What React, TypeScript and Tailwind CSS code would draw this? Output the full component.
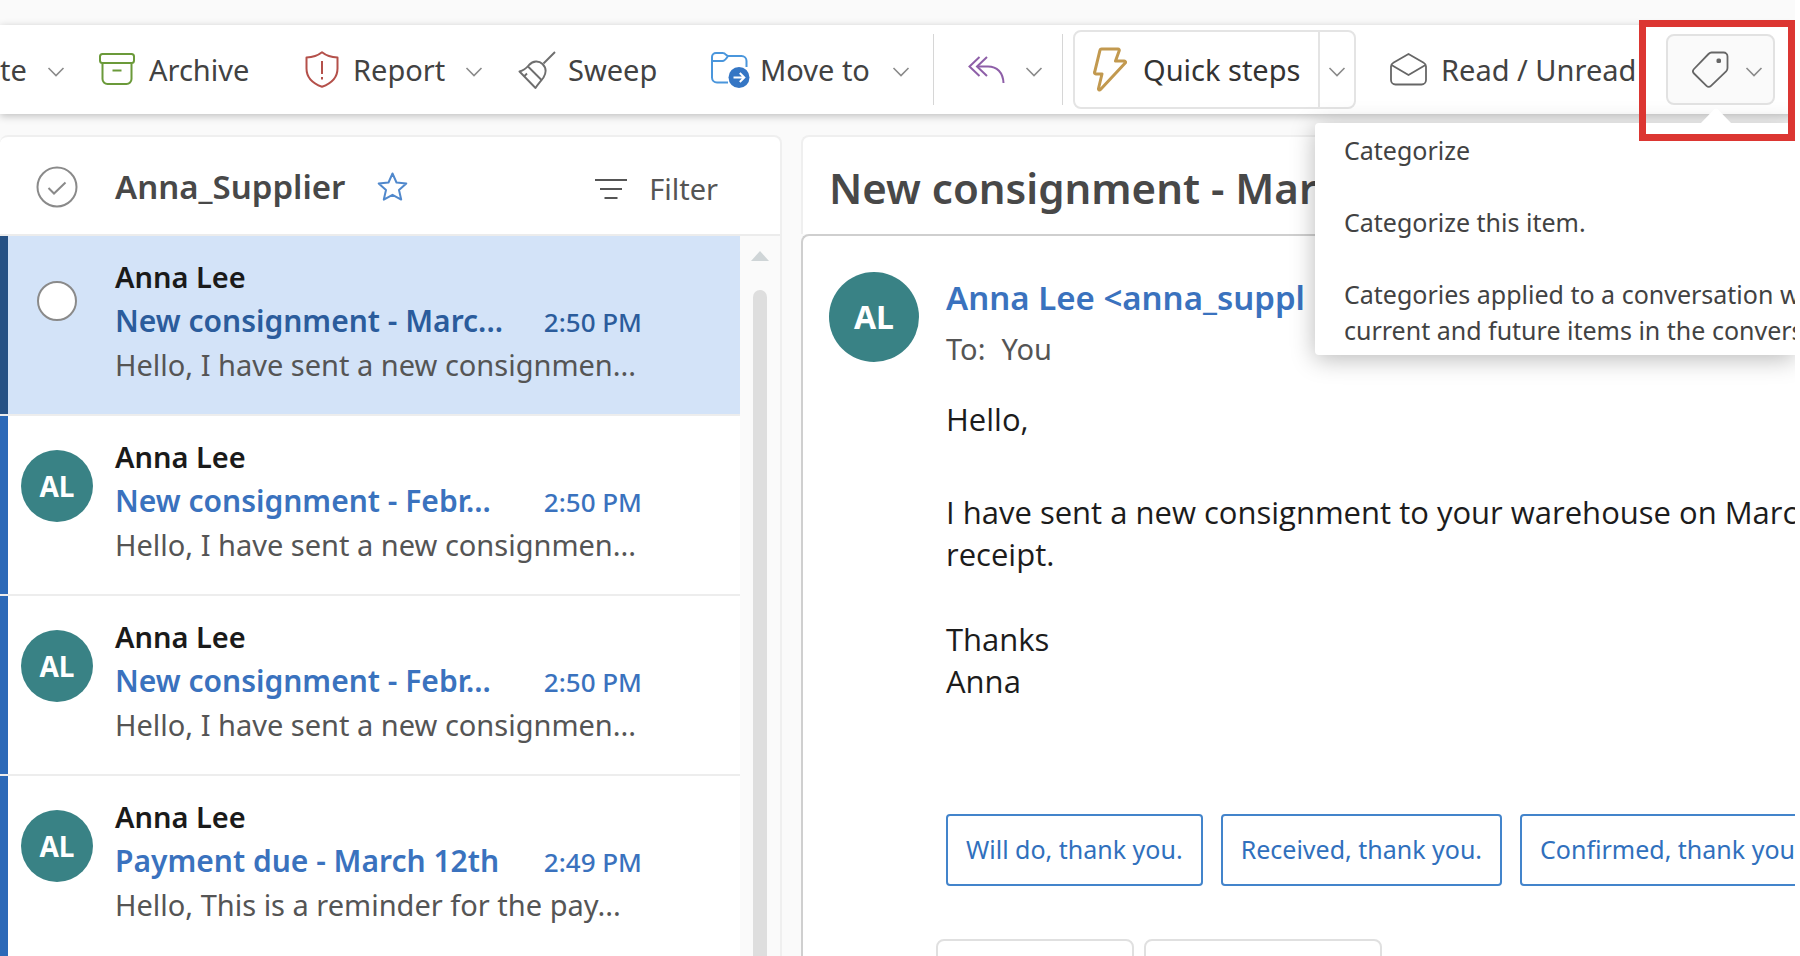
import React from "react";

interface Mail {
  id: number;
  from: string;
  subject: string;
  time: string;
  preview: string;
  selected?: boolean;
}

const mails: Mail[] = [
  {
    id: 1,
    from: "Anna Lee",
    subject: "New consignment - Marc...",
    time: "2:50 PM",
    preview: "Hello, I have sent a new consignmen...",
    selected: true,
  },
  {
    id: 2,
    from: "Anna Lee",
    subject: "New consignment - Febr...",
    time: "2:50 PM",
    preview: "Hello, I have sent a new consignmen...",
  },
  {
    id: 3,
    from: "Anna Lee",
    subject: "New consignment - Febr...",
    time: "2:50 PM",
    preview: "Hello, I have sent a new consignmen...",
  },
  {
    id: 4,
    from: "Anna Lee",
    subject: "Payment due - March 12th",
    time: "2:49 PM",
    preview: "Hello, This is a reminder for the pay...",
  },
];

const replies = [
  "Will do, thank you.",
  "Received, thank you.",
  "Confirmed, thank you",
];

const Chevron = ({ className = "" }: { className?: string }) => (
  <svg
    width="18"
    height="10"
    viewBox="0 0 18 10"
    fill="none"
    stroke="#8a8a8a"
    strokeWidth="1.6"
    className={`shrink-0 ${className}`}
  >
    <path d="M1.500 1L9 8.500 16.500 1" />
  </svg>
);

const ArchiveIcon = () => (
  <svg width="36" height="33" viewBox="0 0 36 33" fill="none" stroke="#6b9a3a" strokeWidth="2">
    <rect x="1" y="1" width="34" height="9" rx="2.5" />
    <path d="M3.500 10v16a5 5 0 0 0 5 5h19a5 5 0 0 0 5-5V10M13.500 17.500h9" />
  </svg>
);

const ReportIcon = () => (
  <svg width="34" height="37" viewBox="0 0 34 37" fill="none" stroke="#b4504a" strokeWidth="2">
    <path
      d="M17 1.200c4.500 3.600 9.500 5 15.500 5.300v11c0 8.500-5 14.500-15.500 18.300C6.500 32 1.500 26 1.500 17.500v-11C7.500 6.200 12.500 4.800 17 1.200z"
      strokeLinejoin="round"
    />
    <path d="M17 10v13M17 26v2.500" />
  </svg>
);

const SweepIcon = () => (
  <svg width="38" height="38" viewBox="0 0 38 38" fill="none" stroke="#6e6e6e" strokeWidth="1.900">
    <path d="M37 1L25.500 12.500" />
    <path d="M1.500 20.500c4-1 7-3.500 9.500-6.500 4-4.500 10-4.500 13.500-1s4 8.500 1 13.500c-2.500 3.500-5.500 6.500-8 10.500L1.500 20.500z" strokeLinejoin="round" />
    <path d="M10 15.500L24 29.500M6 25.500l3-3" />
  </svg>
);

const MoveIcon = () => (
  <svg width="40" height="38" viewBox="0 0 40 38" fill="none" stroke="#4a96dc" strokeWidth="2">
    <path d="M18 31.500H7a5 5 0 0 1-5-5V6a4 4 0 0 1 4-4h6.500c1.500 0 2.500.5 3.500 1.800L18 5h13.500A5 5 0 0 1 36.500 10v6" />
    <path d="M2 10h10.500c2 0 3-1 5.500-5" />
    <circle cx="29" cy="26.500" r="10.500" fill="#3576c4" stroke="none" />
    <path d="M23.500 26.500H34M29.800 22l4.500 4.500-4.500 4.500" stroke="#fff" />
  </svg>
);

const ReplyAllIcon = () => (
  <svg width="37" height="28" viewBox="0 0 37 28" fill="none" stroke="#8e5fa8" strokeWidth="2">
    <path d="M11.500 1L1.500 10.500l10 9.500M19 1L9 10.500l10 9.500" />
    <path d="M9.500 10.500H20c9 0 15 6 15.500 16.500" />
  </svg>
);

const BoltIcon = () => (
  <svg width="34" height="45" viewBox="0 0 34 45" fill="none" stroke="#c2994f" strokeWidth="3" strokeLinejoin="round">
    <path d="M8.500 2h16.500c1 0 1.500.8 1.200 1.700L22.500 14h8.800c1.200 0 1.700 1.200.9 2.100L7.500 42.500c-1 1-2.300.2-2-1L9 27H2.800c-.9 0-1.500-.8-1.200-1.700L7 3.200C7.200 2.500 7.800 2 8.500 2z" />
  </svg>
);

const MailOpenIcon = () => (
  <svg width="37" height="33" viewBox="0 0 37 33" fill="none" stroke="#666" strokeWidth="1.800" strokeLinejoin="round">
    <path d="M1 13.500c0-1.800.8-3 2.300-3.800L18.500 1l15.200 8.700c1.500.8 2.300 2 2.300 3.800V27a4.500 4.500 0 0 1-4.500 4.500h-26A4.500 4.500 0 0 1 1 27V13.500z" />
    <path d="M1.500 12l17 10 17-10" />
  </svg>
);

const TagIcon = () => (
  <svg width="37" height="37" viewBox="0 0 37 37" fill="none" stroke="#666" strokeWidth="1.800" strokeLinejoin="round">
    <path d="M19.500 1.500h12a4 4 0 0 1 4 4v11.500c0 1.500-.4 2.400-1.400 3.400L19 34.800c-1.500 1.400-3 1.400-4.500 0L2 22.500c-1.500-1.500-1.400-3 0-4.500L16.500 3c1-1 1.800-1.500 3-1.500z" />
    <rect x="24.500" y="7.500" width="4.500" height="4.500" rx="1.500" fill="#666" stroke="none" />
  </svg>
);

const Toolbar = () => (
  <header className="relative z-10 flex h-[89px] shrink-0 items-center bg-white pr-5 text-[29px] text-[#424242] shadow-[0_2px_8px_rgba(0,0,0,0.24)]">
    <button className="flex w-[99px] shrink-0 items-center gap-5">
      te
      <Chevron className="mt-1" />
    </button>
    <button className="flex w-[206px] shrink-0 items-center gap-3.5">
      <ArchiveIcon />
      Archive
    </button>
    <button className="flex w-[213px] shrink-0 items-center gap-3.5">
      <ReportIcon />
      Report
      <Chevron className="mt-1 ml-1.5" />
    </button>
    <button className="flex w-[192px] shrink-0 items-center gap-3">
      <SweepIcon />
      Sweep
    </button>
    <button className="flex w-[223px] shrink-0 items-center gap-2.5">
      <MoveIcon />
      Move to
      <Chevron className="mt-1 ml-3" />
    </button>
    <div className="h-[71px] w-px bg-[#d6d6d6]" />
    <button aria-label="Reply all" className="flex w-32 shrink-0 items-center gap-5 pl-[34px]">
      <ReplyAllIcon />
      <Chevron className="mt-1" />
    </button>
    <div className="h-[71px] w-px bg-[#d6d6d6]" />
    <div className="ml-2.5 flex h-[79px] w-[283px] shrink-0 rounded-lg border-2 border-[#e4e4e4] text-[#333]">
      <button className="flex flex-1 items-center gap-4 pl-[18px] whitespace-nowrap">
        <BoltIcon />
        Quick steps
      </button>
      <button
        aria-label="More quick steps"
        className="flex w-9 items-center justify-center border-l-2 border-[#e4e4e4]"
      >
        <Chevron className="mt-1" />
      </button>
    </div>
    <button className="ml-[34px] flex shrink-0 items-center gap-3.5 whitespace-nowrap">
      <MailOpenIcon />
      Read / Unread
    </button>
    <div className="relative ml-auto shrink-0">
      <button
        aria-label="Categorize"
        aria-describedby="categorize-tip"
        className="flex h-[71px] w-[109px] items-center gap-4 rounded-lg border-2 border-[#e2e2e2] bg-[#fafafa] pl-6"
      >
        <TagIcon />
        <Chevron className="mt-1" />
      </button>
      <CategorizeTip />
      <div className="pointer-events-none absolute -top-3.5 -right-5 -bottom-9 -left-[27px] border-[7px] border-[#dc3632]" />
    </div>
  </header>
);

const CategorizeTip = () => (
  <>
    <div
      id="categorize-tip"
      role="tooltip"
      className="absolute top-[89px] -right-5 w-[480px] rounded-l-sm bg-white pt-[9px] pb-[7px] pl-[29px] text-[25px] leading-9 whitespace-pre text-[#424242] shadow-[0_4px_24px_rgba(0,0,0,0.28)]"
    >
      <p>Categorize</p>
      <p className="mt-9">Categorize this item.</p>
      <p className="mt-9">Categories applied to a conversation w</p>
      <p>current and future items in the convers</p>
    </div>
    <svg width="32" height="16" viewBox="0 0 32 16" className="absolute top-[74px] left-[34px]">
      <path d="M0 16L14 1.500q2-2 4 0L32 16z" fill="#fff" />
    </svg>
  </>
);

const MailRow = ({ mail }: { mail: Mail }) => (
  <li
    className={`flex h-[180px] border-b-2 border-[#ededed] last:border-b-0 ${mail.selected ? "bg-[#d3e3f8]" : "bg-white"}`}
  >
    <div className={`w-2 shrink-0 ${mail.selected ? "bg-[#265184]" : "bg-[#2c69b8]"}`} />
    <div className="flex w-[107px] shrink-0 justify-center pr-[9px]">
      {mail.selected ? (
        <input
          type="checkbox"
          aria-label={`Select ${mail.subject}`}
          className="mt-[45px] size-10 appearance-none rounded-full border-2 border-[#8a8a8a] bg-white"
        />
      ) : (
        <div className="mt-[34px] flex size-[72px] items-center justify-center rounded-full bg-[#398285] text-[28px] font-bold text-white">
          AL
        </div>
      )}
    </div>
    <div className="min-w-0 flex-1 pt-[19px] pr-[98px] text-[29px] leading-[44px] whitespace-nowrap">
      <p className="font-semibold text-[#1a1a1a]">{mail.from}</p>
      <div
        className={`flex h-11 items-baseline justify-between ${mail.selected ? "text-[#2b5c9c]" : "text-[#3a72be]"}`}
      >
        <p className="text-[30px] font-semibold">{mail.subject}</p>
        <span className="text-[26px] font-medium">{mail.time}</span>
      </div>
      <p className="text-[#555]">{mail.preview}</p>
    </div>
  </li>
);

const MailList = () => (
  <section className="flex w-[782px] shrink-0 flex-col rounded-t-lg border-t-2 border-r-2 border-[#efefef] bg-white">
    <div className="flex h-[99px] shrink-0 items-center border-b-2 border-[#ececec] pt-0.5 pr-[62px] pl-9">
      <button aria-label="Select all">
        <svg width="42" height="42" viewBox="0 0 42 42" fill="none" stroke="#8a8a8a" strokeWidth="2">
          <circle cx="21" cy="21" r="19.500" />
          <path d="M12.500 22l5.500 5.500L29.500 16.500" />
        </svg>
      </button>
      <h2 className="ml-[37px] text-[33px] font-semibold text-[#484848]">Anna_Supplier</h2>
      <button aria-label="Add to favorites" className="ml-8">
        <svg width="31" height="29" viewBox="0 0 31 29" fill="none" stroke="#5088cc" strokeWidth="2" strokeLinejoin="round">
          <path d="M15.500 1.500l4 9 9.800 1-7.300 6.600 2.200 9.500-8.700-4.800-8.700 4.800L9 18.100 1.700 11.500l9.800-1z" />
        </svg>
      </button>
      <button className="mt-1 ml-auto flex items-center gap-[22px] text-[29px] text-[#555]">
        <svg width="32" height="22" viewBox="0 0 32 22" fill="none" stroke="#555" strokeWidth="2">
          <path d="M0 2h32M5 11h22M9.500 20h13" />
        </svg>
        Filter
      </button>
    </div>
    <div className="flex min-h-0 flex-1">
      <ul className="min-w-0 flex-1">
        {mails.map((m) => (
          <MailRow key={m.id} mail={m} />
        ))}
      </ul>
      <div className="flex w-10 shrink-0 flex-col items-center bg-[#fafafa] pt-[15px]">
        <svg width="18" height="10" viewBox="0 0 18 10">
          <path d="M9 0l9 10H0z" fill="#cfd5d7" />
        </svg>
        <div className="mt-[29px] w-3.5 flex-1 rounded-t-full bg-[#dedede]" />
      </div>
    </div>
  </section>
);

const ReadingPane = () => (
  <main className="flex min-w-0 flex-1 flex-col whitespace-nowrap">
    <div className="flex h-[99px] shrink-0 items-center rounded-tl-lg border-t-2 border-l-2 border-[#efefef] bg-white pt-1 pl-[26px]">
      <h1 className="text-[42px] font-semibold text-[#484848]">New consignment - Mar</h1>
    </div>
    <article className="flex min-h-0 flex-1 rounded-tl-lg border-t-2 border-l-2 border-[#cfcfcf] bg-white pl-[26px]">
      <div className="mt-9 flex size-[90px] shrink-0 items-center justify-center rounded-full bg-[#398285] text-[32px] font-bold text-white">
        AL
      </div>
      <div className="ml-[27px] pt-[34px]">
        <p className="text-[33px] leading-[56px] font-semibold text-[#3a72be]">
          Anna Lee &lt;anna_suppl
        </p>
        <p className="flex gap-4 text-[29px] leading-[46px] text-[#555]">
          <span>To:</span>
          <span>You</span>
        </p>
        <div className="mt-[26px] font-['Open_Sans',sans-serif] text-[31px] leading-[42px] text-[#1c1c1c]">
          <p>Hello,</p>
          <p className="mt-[51px]">
            I have sent a new consignment to your warehouse on Marc
            <br />
            receipt.
          </p>
          <p className="mt-[43px]">
            Thanks
            <br />
            Anna
          </p>
        </div>
        <div className="mt-28 flex gap-[18px] text-[25px] text-[#3070bd]">
          {replies.map((r) => (
            <button key={r} className="h-[72px] shrink-0 rounded-sm border-2 border-[#4384cb] px-[18px]">
              {r}
            </button>
          ))}
        </div>
        {/* reply and forward run past the bottom edge */}
        <div className="mt-[53px] -ml-2.5 flex gap-2.5">
          <button aria-label="Reply" className="h-[72px] w-[198px] rounded-lg border-2 border-[#e0e0e0]" />
          <button aria-label="Forward" className="h-[72px] w-[238px] rounded-lg border-2 border-[#e0e0e0]" />
        </div>
      </div>
    </article>
  </main>
);

export default function App() {
  return (
    <div className="h-screen bg-white pr-[5px] font-['Noto_Sans',sans-serif]">
      <div className="flex h-full flex-col overflow-hidden bg-[#fafafa] pt-[25px]">
        <Toolbar />
        <div className="flex min-h-0 flex-1 gap-[19px] pt-[21px]">
          <MailList />
          <ReadingPane />
        </div>
      </div>
    </div>
  );
}
